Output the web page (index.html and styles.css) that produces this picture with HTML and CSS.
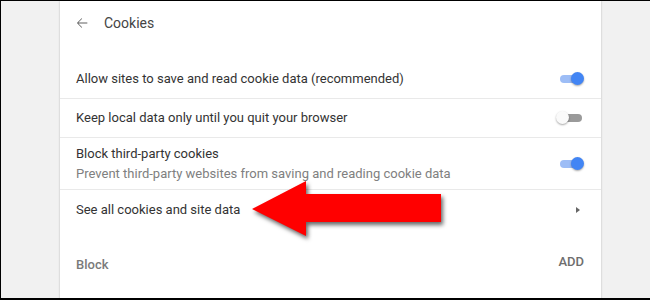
FILE: index.html
```html
<!DOCTYPE html>
<html lang="en">

<head>
    <meta charset="UTF-8" />
    <meta name="viewport" content="width=device-width, initial-scale=1.0" />
    <title>Cookies - Settings</title>
    <link rel="stylesheet" href="styles.css">
</head>

<body>
    <div class="card">
        <div class="header">
            <svg class="back" viewBox="0 0 24 24" width="16" height="16">
                <path d="M20 11.4H6.6l5.6-5.6-.8-.8L4.4 12l7 7 .8-.8-5.6-5.6H20z" fill="currentColor" />
            </svg>
            <h1>Cookies</h1>
        </div>

        <div class="row">
            <div class="label">Allow sites to save and read cookie data (recommended)</div>
            <div class="toggle on"></div>
        </div>
        <div class="row short">
            <div class="label">Keep local data only until you quit your browser</div>
            <div class="toggle"></div>
        </div>
        <div class="row tall">
            <div class="label">
                Block third-party cookies
                <div class="secondary">Prevent third-party websites from saving and reading cookie data</div>
            </div>
            <div class="toggle on"></div>
        </div>
        <div class="row last">
            <div class="label">See all cookies and site data</div>
            <div class="subpage"></div>
        </div>

        <div class="section">
            <div class="section-title">Block</div>
            <button class="add">ADD</button>
        </div>
        <div class="empty">No sites added</div>
    </div>

    <!-- annotation arrow drawn over the screenshot -->
    <svg class="pointer" width="650" height="300" viewBox="0 0 650 300">
        <polygon points="252,209 306,181 306,194 441,194 441,222 306,222 306,236" />
    </svg>
</body>

</html>
```

FILE: styles.css
```css
html {
    background-color: #f1f1f1;
}

body {
    margin: 0;
    height: 300px;
    box-sizing: border-box;
    overflow: hidden;
    border-top: 1px solid #000;
    border-left: 1px solid #000;
    border-bottom: 2px solid #000;
    background-color: #f1f1f1;
    font-family: Roboto, "Liberation Sans", Arial, sans-serif;
    font-size: 13px;
    color: #333;
}

.card {
    width: 541px;
    min-height: 320px;
    margin-left: 59px;
    background-color: white;
    box-shadow: 0 0 2px rgba(0, 0, 0, 0.25);
}

.header {
    display: flex;
    align-items: center;
    height: 43px;
    padding-left: 14px;
    margin-bottom: 15px;
}

.back {
    color: #606060;
    margin-right: 14px;
}

h1 {
    margin: 0;
    font-size: 14px;
    font-weight: 400;
    color: #444;
}

.row {
    display: flex;
    align-items: center;
    justify-content: space-between;
    height: 39px;
    padding: 0 17px 0 16px;
    border-bottom: 1px solid #e9e9e9;
    line-height: 20px;
}

.row.short {
    height: 38px;
}

.row.tall {
    height: 51px;
}

.row.last {
    height: 40px;
    border-bottom: none;
}

.secondary {
    color: #808080;
}

.toggle {
    position: relative;
    width: 28px;
    height: 14px;
}

.toggle::before {
    content: "";
    position: absolute;
    left: 4px;
    right: 2px;
    top: 3px;
    height: 8px;
    border-radius: 4px;
    background-color: #9a9a9a;
}

.toggle::after {
    content: "";
    position: absolute;
    left: 0;
    top: 0;
    width: 13px;
    height: 13px;
    border-radius: 50%;
    background-color: #fafafa;
    box-shadow: 0 1px 2px rgba(0, 0, 0, 0.35);
}

.toggle.on::before {
    background-color: #9dbdf6;
}

.toggle.on::after {
    left: auto;
    right: 0;
    background-color: #4285f4;
}

.subpage {
    width: 0;
    height: 0;
    margin-right: 4px;
    border-top: 3.5px solid transparent;
    border-bottom: 3.5px solid transparent;
    border-left: 4px solid #666;
}

.section {
    display: flex;
    align-items: center;
    justify-content: space-between;
    height: 40px;
    margin-top: 14px;
    padding: 0 17px 0 16px;
}

.section-title {
    font-weight: 500;
    color: #7a7a7a;
}

.add {
    margin-bottom: 5px;
    padding: 0;
    border: none;
    background: none;
    font-family: inherit;
    font-size: 13px;
    font-weight: 500;
    color: #6e6e6e;
}

.empty {
    margin-top: 10px;
    padding-left: 48px;
    line-height: 20px;
    color: #555;
}

.pointer {
    position: absolute;
    left: 0;
    top: 0;
    pointer-events: none;
}

.pointer polygon {
    fill: #ff0000;
    filter: drop-shadow(2px 3px 2px rgba(0, 0, 0, 0.6));
}
```
